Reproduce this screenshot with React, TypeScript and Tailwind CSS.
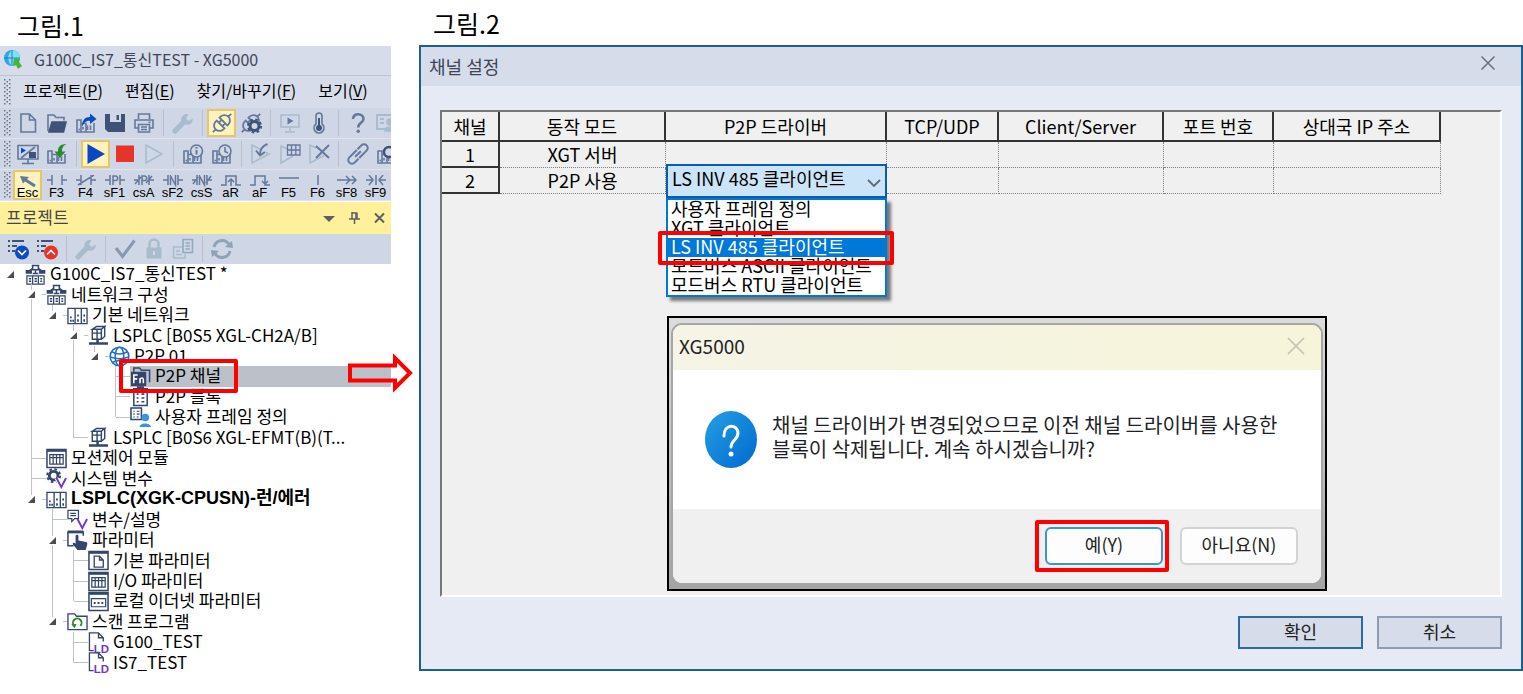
import React from "react";

type Children = { children?: React.ReactNode };

const NAVY = "#3f5378";
const STEEL = "#64789b";
const PALE = "#a9bccd";

function Svg({ children, color = STEEL, size = 22 }: Children & { color?: string; size?: number }) {
  return (
    <svg width={size} height={size} viewBox="0 0 22 22" fill="none" stroke={color} strokeWidth="1.6" aria-hidden="true" className="-my-1 shrink-0">
      {children}
    </svg>
  );
}

/* ---------- toolbar drawings ---------- */

const wrench = (
  <Svg color={PALE}>
    <path d="M14.500 12.500a5 5 0 0 0 6-6l-3 2.200-2.600-.8-.6-2.600 2.400-2.800a5.500 5.500 0 0 0-7.400 6.200L1.200 16.900a2.600 2.600 0 0 0 3.800 3.800l8-8.200z" fill={PALE} stroke="none" />
  </Svg>
);

const plugPath = (
  <>
    <g transform="rotate(-45 11 11)" strokeWidth="1.800">
      <path d="M9 5.500H7.500A5.500 5.500 0 0 0 7.500 16.500H9ZM-2 11H2M20 11H24M13 5.500H14.500A5.500 5.500 0 0 1 14.500 16.500H13ZM9 8.500H13M9 13.500H13" />
    </g>
  </>
);

const bars = (
  <>
    <path d="M2 8H6V20H2ZM6 11.500H11V20H6ZM11 20H19V11" />
    <path d="M3.500 17.500H5M8 15V17.500M12.500 13.500V18M15.500 13.500V18" />
  </>
);

const files: React.ReactNode[] = [
  <Svg><path d="M4 2H12.500L18.500 8V20H4ZM12.500 2V8H18.500" /></Svg>,
  <Svg><path d="M2 19V3H8L10 5.500H18V8.500" /><path d="M3 20L6 10H20L17.500 20Z" fill={NAVY} stroke={NAVY} /></Svg>,
  <Svg>{bars}<path d="M7 15C7 8 10 5 15 5V1.500L21.500 7L15 12V8.800C11 8.800 9 10.500 7 15Z" fill="#0b4cc4" stroke="none" /></Svg>,
  <Svg><path d="M1 2H21V20H4L1 17Z" fill={NAVY} stroke="none" /><path d="M6 2H17V10H6Z" fill="#d0d7e7" stroke="none" /><path d="M12.500 3H15V8H12.500Z" fill={NAVY} stroke="none" /></Svg>,
  <Svg><path d="M5.500 7V2H16.500V7M5.500 16H2V8H20V16H16.500M5.500 12.500H16.500V20H5.500ZM8 15H14M8 17.500H14M15.500 10.300H17.500" /></Svg>,
];

const monitorPlay = <Svg color={PALE}><path d="M2 3H20V15H2ZM11 15V19M6 20H16" /><path d="M8.500 5.500L14.500 9L8.500 12.500Z" fill={STEEL} stroke="none" /></Svg>;
const thermometer = <Svg><path d="M8 12V4A3 3 0 0 1 14 4V12A5 5 0 1 1 8 12Z" /><circle cx="11" cy="16" r="3" fill={NAVY} stroke="none" /><path d="M11 6V15" stroke={NAVY} strokeWidth="2" /></Svg>;
const question = <Svg><path d="M6 7C6 .5 16.500 .8 16.500 7C16.500 11 11.200 10.500 11.200 15.500" strokeWidth="2.600" /><circle cx="11.200" cy="19.300" r="1.700" fill={STEEL} stroke="none" /></Svg>;
const formUser = <Svg color={PALE}><path d="M1 3H21V17H1ZM4 7H8M4 11H8" strokeWidth="2" /><circle cx="14" cy="10" r="3" fill={PALE} /><path d="M9 19C9 14 19 14 19 19Z" fill={PALE} /></Svg>;
const plug = <Svg>{plugPath}</Svg>;
const plugGear = <Svg>{plugPath}<circle cx="14.500" cy="14" r="4.500" stroke={NAVY} strokeWidth="3" fill="#d0d7e7" /><circle cx="14.500" cy="14" r="6.500" stroke={NAVY} strokeWidth="2" strokeDasharray="2.600 2.500" /></Svg>;

const monitorEdit = <Svg><path d="M1 2.500H21V16H1ZM11 16V20M5 20.500H17" /><path d="M4 4.500L9 7.500L4 10.500Z" fill="#0b4cc4" stroke="none" /><path d="M4 15L18 4" /><path d="M12 9H19V15H12Z" fill={NAVY} stroke="none" /></Svg>;
const barsGreen = <Svg>{bars}<path d="M20.500 1C13 1 12 5 12 8.500H8.500L14 15L19.500 8.500H16C16 5 17 3 20.500 1Z" fill="#2c8a2c" stroke="none" /></Svg>;
const playBlue = <Svg><path d="M2.500 1L20 11L2.500 21Z" fill="#0b46c4" stroke="none" /></Svg>;
const stopRed = <Svg><path d="M2 2.500H20V19H2Z" fill="#e6342a" stroke="none" /></Svg>;
const playOutline = <Svg color={PALE}><path d="M3 2L19 11L3 20Z" /></Svg>;
const barsInfo = <Svg>{bars}<circle cx="14.500" cy="8" r="6" fill="#d0d7e7" /><path d="M14.500 7V11.500M14.500 4V5.800" strokeWidth="2" /></Svg>;
const barsClock = <Svg>{bars}<circle cx="14" cy="8" r="6" fill="#d0d7e7" /><path d="M14 4V8.500L17 10" /></Svg>;
const barsLens = <Svg>{bars}<circle cx="13" cy="9" r="5" fill="#d0d7e7" stroke={NAVY} strokeWidth="2.400" /></Svg>;
const triCheck = <Svg color={PALE}><path d="M12 7L2 2V20L19 11L16 9.500" /><path d="M17.500 1C12.500 3 10 6 10 11M6 7.500L10 12.500L15 9" stroke={STEEL} strokeWidth="2" /></Svg>;
const triGrid = <Svg color={PALE}><path d="M8 6L2 3V20L14 13" /><path d="M8.500 2H21V12H8.500ZM12.500 2V12M16.800 2V12M8.500 7H21" stroke={STEEL} strokeWidth="1.300" /></Svg>;
const triX = <Svg color={PALE}><path d="M8 5L2 2V20L16 12.500" /><path d="M8 3L21 15M21 2L8 15" stroke={STEEL} strokeWidth="2" /></Svg>;
const link = <Svg><g transform="rotate(-45 11 11)" strokeWidth="2"><path d="M13 7.300H2.500A3.700 3.700 0 0 0 2.500 14.700H8M9 14.700H19.500A3.700 3.700 0 0 0 19.500 7.300H14" /><path d="M7 11H15" /></g></Svg>;

function Ladder({ children }: Children) {
  return (
    <svg width="24" height="12" viewBox="0 0 24 12" fill="none" stroke={STEEL} strokeWidth="1.500" aria-hidden="true" className="shrink-0">
      {children}
    </svg>
  );
}

const contact = "M2 5H7M7 0V10M17 0V10M17 5H22";
const glyph = (d: string) => <Ladder><path d={d} /></Ladder>;

const ladderKeys: { label: string; art: React.ReactNode }[] = [
  { label: "Esc", art: <Ladder><path d="M19 11L8 4" strokeWidth="3" /><path d="M4 1L13 2L7 8.500Z" fill={STEEL} stroke="none" /></Ladder> },
  { label: "F3", art: glyph(contact) },
  { label: "F4", art: glyph(contact + "M4 10L20 0") },
  { label: "sF1", art: glyph(contact + "M10 10V1H12.500A2.200 2.200 0 0 1 12.500 5.500H10") },
  { label: "csA", art: glyph(contact + "M3 9L9 2M10 10V1H12.500A2.200 2.200 0 0 1 12.500 5.500H10M14 8L20 1") },
  { label: "sF2", art: glyph(contact + "M9.500 10V1L14.500 10V0") },
  { label: "csS", art: glyph(contact + "M3 9L8 2M9.500 10V1L14.500 10V0M16 8L21 1") },
  { label: "aR", art: glyph("M2 10H7V1H17V10H22M12 11V4M9 7L12 4L15 7") },
  { label: "aF", art: glyph("M2 10H7V1H17V10H22M14 6L17 9L20 6") },
  { label: "F5", art: glyph("M2 3H22") },
  { label: "F6", art: glyph("M12 0V10") },
  { label: "sF8", art: glyph("M2 5H21M11 1L15 5L11 9M17 1L21 5L17 9") },
  { label: "sF9", art: glyph("M2 5H9M15 5H22M5 0L9 5L5 10M19 0L15 5L19 10M12 0V10") },
];

function Grip() {
  return (
    <svg width="8" height="26" viewBox="0 0 8 26" fill="#6f7480" aria-hidden="true" className="shrink-0">
      {[0, 1, 2, 3, 4, 5, 6].map((n) => (
        <g key={n}>
          <rect x="0" y={n * 4} width="1.500" height="1.500" />
          <rect x="5" y={n * 4} width="1.500" height="1.500" />
          <rect x="2.500" y={n * 4 + 2} width="1.500" height="1.500" />
        </g>
      ))}
    </svg>
  );
}

function Separator() {
  return <span className="flex w-[10px] shrink-0 justify-center"><span className="h-[26px] w-px bg-[#b9bfcc]" /></span>;
}

function Tool({ label, active, children }: Children & { label: string; active?: boolean }) {
  return (
    <button
      type="button"
      aria-label={label}
      className={
        active
          ? "flex h-[28px] w-[29px] shrink-0 items-center justify-center border-2 border-[#e8c56c] bg-[#fdf3bd]"
          : "flex h-[28px] w-[29px] shrink-0 items-center justify-center"
      }
    >
      {children}
    </button>
  );
}

function Bar({ children }: Children) {
  return <div className="flex h-[31px] items-center overflow-hidden border-b border-[#dfe4ef] bg-[#cfd6e6] pl-[4px]"><Grip /><span className="w-px shrink-0" />{children}</div>;
}

/* ---------- tree drawings ---------- */

const INK = "#34466c";

const network = (
  <Svg color={INK} size={21}>
    <path d="M7 1.500H15M8 1.500V6H14V1.500M11 6V10M4 7.500L8 4.500M14 4.500L18 7.500M8 10H14" />
    <path d="M1.500 7H6.500V9.500H1.500ZM15.500 7H20.500V9.500H15.500Z" fill={INK} />
    <path d="M2 12.500H20V21H2ZM8 12.500V21M14 12.500V21" strokeWidth="1.300" />
    <path d="M4 15.500H6.500M10 15.500H12.500M16 15.500H18M4 18H6.500M10 18H12.500M16 18H18" />
  </Svg>
);
const rack = (
  <Svg color={INK} size={21}>
    <path d="M1 3.500H21V19.500H1ZM8.500 3.500V19.500M15 3.500V19.500" strokeWidth="1.400" />
    <path d="M4 12V14M4 15.500V17.500M6.500 15.500V17.500M11.500 10V12M11.500 15V17.500M18 10V12M18 15V17.500" strokeWidth="1.800" />
  </Svg>
);
const server = (
  <Svg color={INK} size={21}>
    <path d="M4.500 4.500L9 1.500H17.500L14 4.500ZM4.500 4.500H14V15H4.500ZM14 4.500L17.500 1.500V12L14 15M9.500 4.500V15M4.500 8.500H14" strokeWidth="1.500" />
    <path d="M10 15V18.500M1 19.500H21" strokeWidth="2.600" />
  </Svg>
);
const globe = (
  <Svg color="#1c70c8" size={21}>
    <circle cx="11" cy="11" r="9.800" fill="#fff" />
    <ellipse cx="11" cy="11" rx="4.500" ry="9.800" />
    <path d="M3 6C8 9 14 9 19 6M1.500 11.500C8 14 14 14 20.500 11.500M4 17C8 15 14 15 18 17" />
  </Svg>
);
const fnFolder = (
  <Svg color={INK} size={21}>
    <path d="M4 6V2H10L12 4.500H20.500V17" fill="#bfc5d1" />
    <path d="M1 6H17V21H1Z" fill={INK} stroke="none" />
    <path d="M4 18V9.500H8M4 13.500H7.500M10.500 18V12.500M10.500 14C11.500 12 14 12 14 14.500V18" stroke="#fff" strokeWidth="1.600" />
  </Svg>
);
const blockDoc = (
  <Svg color={INK} size={21}>
    <path d="M4 3H18V20.500H4Z" fill="#fff" />
    <path d="M8 1H14V4H8Z" fill={INK} />
    <path d="M7 8.500H9M12 8.500H15M7 12.500H9M12 12.500H15M7 16.500H9M12 16.500H15" />
  </Svg>
);
const userDoc = (
  <Svg color={INK} size={21}>
    <path d="M1 1H12V13H1Z" />
    <path d="M3.500 4.500H5M7 4.500H10M3.500 7.500H5M7 7.500H10M3.500 10.500H5M7 10.500H9" strokeWidth="1.200" />
    <circle cx="16" cy="11" r="4" fill="#3d94de" stroke="none" />
    <path d="M10 21C10 16 22 16 22 21Z" fill="#3d94de" stroke="none" />
  </Svg>
);
const frameIcon = (inner: React.ReactNode) => (
  <Svg color={INK} size={21}>
    <path d="M1 1.500H21V20.500H1Z" fill="#fff" />
    <path d="M1 2.500H21" strokeWidth="3" />
    {inner}
  </Svg>
);
const moduleIcon = frameIcon(<path d="M4 7H18V17H4ZM7.500 7V17M11 7V17M14.500 7V17M4 10H18" strokeWidth="1.300" />);
const fileIcon = frameIcon(<path d="M6.500 6.500H12L16 10.500V18H6.500ZM12 6.500V10.500H16" strokeWidth="1.400" />);
const etherIcon = frameIcon(<><path d="M3.500 8H18.500V16.500H3.500Z" strokeWidth="1.300" /><path d="M6 12.500H8M10 12.500H12M14 12.500H16" strokeWidth="2" /></>);
const gearV = (
  <Svg color={INK} size={21}>
    <circle cx="8" cy="8" r="4.500" strokeWidth="3" />
    <circle cx="8" cy="8" r="6.800" strokeWidth="2" strokeDasharray="2.700 2.640" />
    <path d="M11 10.500L16 20L21 10.500" stroke="#fff" strokeWidth="4" />
    <path d="M11 10.500L16 20L21 10.500" stroke="#6f38d0" strokeWidth="2" />
  </Svg>
);
const noteV = (
  <Svg color={INK} size={21}>
    <path d="M1 1.500H12V10H8L5 13V10H1ZM3.500 4.500H9.500M3.500 7H9.500" strokeWidth="1.300" />
    <path d="M11 10.500L16 20L21 10.500" stroke="#6f38d0" strokeWidth="2" />
  </Svg>
);
const handIcon = (
  <Svg color={INK} size={21}>
    <path d="M7 16.500H1V2H17V6" /><path d="M1 2H17" strokeWidth="3" />
    <path d="M9 6.500A1.500 1.500 0 0 1 12 6.500V11L20 12.500C21.500 13 21.500 14 21 16L19.500 21H11L6 15C6 13 7.500 13 9 14.500Z" fill={INK} stroke="none" />
  </Svg>
);
const scanFolder = (
  <Svg color={INK} size={21}>
    <path d="M1 19.500V3H8L10 5.500H21V19.500Z" strokeWidth="1.400" />
    <path d="M7.500 15.500A4.500 4.500 0 1 1 14 15.500" stroke="#2c8a2c" strokeWidth="2" />
    <path d="M4.500 14L10 13.500L8 18Z" fill="#2c8a2c" stroke="none" />
  </Svg>
);
const ldFile = (
  <Svg color={INK} size={21}>
    <path d="M6 19.500H1.500V1H11L16 6V10M11 1V6H16" strokeWidth="1.400" />
    <text x="6" y="22" fontSize="12" fontWeight="700" fontFamily="Liberation Sans, sans-serif" fill="#6f38d0" stroke="none">LD</text>
  </Svg>
);

/* ---------- project tree ---------- */

type Node = { level: number; text: string; icon: React.ReactNode; open?: boolean; last?: boolean; lines?: number[]; bold?: boolean; picked?: boolean };

const nodes: Node[] = [
  { level: 0, text: "G100C_IS7_통신TEST *", icon: network, open: true, last: true },
  { level: 1, text: "네트워크 구성", icon: network, open: true },
  { level: 2, text: "기본 네트워크", icon: rack, open: true, last: true, lines: [1] },
  { level: 3, text: "LSPLC [B0S5 XGL-CH2A/B]", icon: server, open: true, lines: [1] },
  { level: 4, text: "P2P 01", icon: globe, open: true, last: true, lines: [1, 3] },
  { level: 5, text: "P2P 채널", icon: fnFolder, lines: [1, 3], picked: true },
  { level: 5, text: "P2P 블록", icon: blockDoc, lines: [1, 3] },
  { level: 5, text: "사용자 프레임 정의", icon: userDoc, last: true, lines: [1, 3] },
  { level: 3, text: "LSPLC [B0S6 XGL-EFMT(B)(T...", icon: server, last: true, lines: [1] },
  { level: 1, text: "모션제어 모듈", icon: moduleIcon },
  { level: 1, text: "시스템 변수", icon: gearV },
  { level: 1, text: "LSPLC(XGK-CPUSN)-런/에러", icon: rack, open: true, last: true, bold: true },
  { level: 2, text: "변수/설명", icon: noteV },
  { level: 2, text: "파라미터", icon: handIcon, open: true },
  { level: 3, text: "기본 파라미터", icon: fileIcon, lines: [2] },
  { level: 3, text: "I/O 파라미터", icon: moduleIcon, lines: [2] },
  { level: 3, text: "로컬 이더넷 파라미터", icon: etherIcon, last: true, lines: [2] },
  { level: 2, text: "스캔 프로그램", icon: scanFolder, open: true, last: true },
  { level: 3, text: "G100_TEST", icon: ldFile },
  { level: 3, text: "IS7_TEST", icon: ldFile, last: true },
];

function Cell({ children }: Children) {
  return <span className="flex w-[21px] shrink-0 flex-col items-center self-stretch">{children}</span>;
}

function Branch({ node }: { node: Node }) {
  const line = "w-px flex-1 bg-[#bcc2cf]";
  const blank = "w-px flex-1";
  return (
    <>
      <Cell>
        <span className={node.level > 0 ? line : blank} />
        {node.open && (
          <svg width="9" height="9" viewBox="0 0 9 9" aria-hidden="true" className="shrink-0"><path d="M8 1V8H1Z" fill="#4d4d4d" /></svg>
        )}
        <span className={node.last ? blank : line} />
      </Cell>
      <span className="flex w-[4px] shrink-0 justify-end">{node.level > 0 && <span className={node.open ? "h-px w-[4px] bg-[#bcc2cf]" : "-ml-[10px] h-px w-[14px] shrink-0 bg-[#bcc2cf]"} />}</span>
    </>
  );
}

function TreeRow({ node }: { node: Node }) {
  const indents = Array.from({ length: node.level }, (_, n) => n);
  return (
    <li role="treeitem" aria-level={node.level + 1} aria-selected={!!node.picked} className="relative flex min-h-[20px] flex-1 items-center">
      {indents.map((n) => (
        <Cell key={n}>{node.lines?.includes(n) && <span className="w-px flex-1 bg-[#bcc2cf]" />}</Cell>
      ))}
      <Branch node={node} />
      <span className={node.picked ? "flex flex-1 items-center gap-[4px] self-stretch bg-[#bbc0c9]" : "flex flex-1 items-center gap-[4px]"}>
        {node.icon}
        <span
          className={
            node.bold
              ? "pb-[2px] font-['Liberation_Sans','Noto_Sans_CJK_KR',sans-serif] text-[18px] leading-[18px] font-bold whitespace-nowrap"
              : "pb-[2px] text-[17px] leading-[18px] whitespace-nowrap"
          }
        >
          {node.text}
        </span>
      </span>
      {node.picked && (
        <>
          <span className="absolute -top-[7px] left-[119px] z-10 h-[34px] w-[119px] rounded-[2px] border-4 border-[#ff0000]" />
          <svg width="66" height="40" viewBox="0 0 66 40" aria-hidden="true" className="absolute -top-[13px] left-[348px] z-10">
            <path d="M2 12.500H47V5L62 20L47 35V27.500H2Z" fill="none" stroke="#ff0000" strokeWidth="4" />
          </svg>
        </>
      )}
    </li>
  );
}

function MenuItem({ text, hotkey }: { text: string; hotkey: string }) {
  return <button type="button" className="shrink-0 whitespace-nowrap">{text}({<u className="underline-offset-2">{hotkey}</u>})</button>;
}

function ProjectWindow() {
  return (
    <section className="flex w-[391px] shrink-0 flex-col pb-[21px]">
      <h2 className="h-[46px] pt-[9px] pl-[17px] text-[25px] leading-[32px]">그림.1</h2>
      <div className="flex h-[30px] items-center gap-[12px] border-b border-[#bfc4cf] bg-[#d6dcea] pb-[4px] pl-[3px] text-[16px] leading-[24px] whitespace-nowrap text-[#3f4558]">
        <svg width="19" height="20" viewBox="0 0 19 20" aria-hidden="true" className="shrink-0">
          <circle cx="9" cy="9" r="8" fill="#2fa6ea" />
          <path d="M9 1A8 8 0 0 1 9 17C4 13 4 5 9 1Z" fill="#7fe0f6" />
          <path d="M1 9H17M9 1V17" stroke="#1c7fd0" strokeWidth="1" />
          <path d="M11 9L17 10L16 13L19 17L15 20L13 16L10 17Z" fill="#43b53a" />
        </svg>
        G100C_IS7_통신TEST - XG5000
      </div>
      <div className="flex h-[32px] items-center overflow-hidden bg-[#d6dcea] pl-[4px] text-[16px] leading-[24px] text-black">
        <Grip />
        <nav className="flex gap-[22px] pb-[4px] pl-[11px]">
          <MenuItem text="프로젝트" hotkey="P" />
          <MenuItem text="편집" hotkey="E" />
          <MenuItem text="찾기/바꾸기" hotkey="F" />
          <MenuItem text="보기" hotkey="V" />
        </nav>
      </div>
      <Bar>
        {["새 파일", "열기", "가져오기", "저장", "인쇄"].map((n, i) => <Tool key={n} label={n}>{files[i]}</Tool>)}
        <Separator />
        <Tool label="설정">{wrench}</Tool>
        <Separator />
        <Tool label="접속" active>{plug}</Tool>
        <Tool label="접속 설정">{plugGear}</Tool>
        <Separator />
        <Tool label="모니터">{monitorPlay}</Tool>
        <Tool label="온도">{thermometer}</Tool>
        <Separator />
        <Tool label="도움말">{question}</Tool>
        <Tool label="사용자">{formUser}</Tool>
      </Bar>
      <Bar>
        <Tool label="모니터 편집">{monitorEdit}</Tool>
        <Tool label="쓰기">{barsGreen}</Tool>
        <Separator />
        <Tool label="런" active>{playBlue}</Tool>
        <Tool label="스톱">{stopRed}</Tool>
        <Tool label="디버그">{playOutline}</Tool>
        <Separator />
        <Tool label="정보">{barsInfo}</Tool>
        <Tool label="시간">{barsClock}</Tool>
        <Separator />
        <Tool label="확인">{triCheck}</Tool>
        <Tool label="표">{triGrid}</Tool>
        <Tool label="해제">{triX}</Tool>
        <Separator />
        <Tool label="링크">{link}</Tool>
        <Tool label="검색">{barsLens}</Tool>
      </Bar>
      <Bar>
        {ladderKeys.map(({ label, art }) => (
          <button
            key={label}
            type="button"
            className={
              label === "Esc"
                ? "flex h-[30px] w-[29px] shrink-0 flex-col items-center justify-center bg-[#fdf3bd] pt-[4px] font-['Liberation_Sans',sans-serif] text-[13px] leading-[12px] ring-2 ring-[#e8c56c] ring-inset"
                : "flex h-[30px] w-[29px] shrink-0 flex-col items-center justify-center pt-[4px] font-['Liberation_Sans',sans-serif] text-[13px] leading-[12px]"
            }
          >
            {art}
            {label}
          </button>
        ))}
      </Bar>
      <div className="mt-px flex h-[32px] items-center justify-between bg-[#fff09c] pr-[6px] pb-[2px] pl-[6px] text-[17px] leading-[24px] text-[#45464c]">
        프로젝트
        <span className="flex items-center gap-[14px] pt-[2px]">
          <button type="button" aria-label="메뉴"><svg width="12" height="12" viewBox="0 0 12 12"><path d="M0 4H12L6 10Z" fill="#5e5f63" /></svg></button>
          <button type="button" aria-label="고정"><svg width="11" height="12" viewBox="0 0 11 12" fill="none" stroke="#5e5f63" strokeWidth="1.500"><path d="M3 0V6.500M8 .500V6.500M3 1H8M0 7H11M5.500 7V12M7 1V7" /></svg></button>
          <button type="button" aria-label="닫기"><svg width="11" height="12" viewBox="0 0 11 12" fill="none" stroke="#5e5f63" strokeWidth="2"><path d="M1 1.500L10 10.500M10 1.500L1 10.500" /></svg></button>
        </span>
      </div>
      <div className="flex h-[30px] items-center bg-[#cfd6e6] pl-[3px]">
        <Tool label="모두 펼치기"><Svg><path d="M1 3H3M5 3H17M1 8H3M5 8H10M1 13H3M5 13H8" strokeWidth="2" stroke={NAVY} /><circle cx="15" cy="14.500" r="7" fill="#0b4cc4" stroke="none" /><path d="M11 12.500L15 16.500L19 12.500" stroke="#fff" /></Svg></Tool>
        <Tool label="모두 접기"><Svg><path d="M1 3H3M5 3H17M1 8H3M5 8H10M1 13H3M5 13H8" strokeWidth="2" stroke={NAVY} /><circle cx="15" cy="14.500" r="7" fill="#e6342a" stroke="none" /><path d="M11 16.500L15 12.500L19 16.500" stroke="#fff" /></Svg></Tool>
        <Separator />
        <Tool label="설정">{wrench}</Tool>
        <Separator />
        <Tool label="적용"><Svg color="#8798b0"><path d="M2 10L8.500 18.500L20.500 2.500" strokeWidth="3" /></Svg></Tool>
        <Tool label="잠금"><Svg color={PALE}><path d="M6.500 10V6A4.500 4.500 0 0 1 15.500 6V10" strokeWidth="2.500" /><path d="M3.500 9.500H18.500V20.500H3.500Z" fill={PALE} stroke="none" /><path d="M11 13V17" stroke="#d0d7e7" strokeWidth="2" /></Svg></Tool>
        <Tool label="복사"><Svg color={PALE}><path d="M10 9H1.500V20H13V16M4 13H8M4 16.500H10" /><path d="M11 1.500H20.500V14.500H11ZM13.500 5H18M13.500 8H18M13.500 11H18" stroke="#94a9bd" /></Svg></Tool>
        <Separator />
        <Tool label="새로 고침"><Svg color="#8fa3b7"><path d="M3 9A8.200 8.200 0 0 1 18 6.500M19 13A8.200 8.200 0 0 1 4 15.500" strokeWidth="3" /><path d="M0 12L1 19L8 13ZM22 10L21 3L14 9Z" fill="#8fa3b7" stroke="none" /></Svg></Tool>
      </div>
      <ul role="tree" className="flex flex-1 flex-col text-black">
        {nodes.map((node, i) => <TreeRow key={i} node={node} />)}
      </ul>
    </section>
  );
}

/* ---------- channel settings ---------- */

const columns = ["채널", "동작 모드", "P2P 드라이버", "TCP/UDP", "Client/Server", "포트 번호", "상대국 IP 주소"];
const drivers = ["사용자 프레임 정의", "XGT 클라이언트", "LS INV 485 클라이언트", "모드버스 ASCII 클라이언트", "모드버스 RTU 클라이언트"];
const picked = "LS INV 485 클라이언트";

function DriverSelect() {
  return (
    <div className="absolute -top-[4px] left-0 z-10 w-[221px] text-left">
      <div className="relative">
        <select aria-labelledby="col-2" defaultValue={picked} className="block h-[34px] w-full appearance-none border-2 border-[#0b5cab] bg-[#cce4f7] pb-[6px] pl-[4px] text-[18px] leading-[24px] text-black">
          {drivers.map((d) => <option key={d}>{d}</option>)}
        </select>
        <svg width="14" height="8" viewBox="0 0 14 8" fill="none" stroke="#5c6a78" strokeWidth="1.800" aria-hidden="true" className="pointer-events-none absolute top-[15px] right-[6px]"><path d="M1 1L7 7L13 1" /></svg>
      </div>
      <ul role="listbox" aria-labelledby="col-2" className="border-2 border-[#0078d7] bg-white shadow-[4px_4px_3px_rgba(0,0,0,0.5)]">
        {drivers.map((d) => (
          <li
            key={d}
            role="option"
            aria-selected={d === picked}
            className={d === picked ? "relative h-[19px] bg-[#0078d7] pl-[3px] leading-[16px] whitespace-nowrap text-white" : "relative h-[19px] pl-[3px] leading-[16px] whitespace-nowrap"}
          >
            {d}
            {d === picked && <span className="absolute -top-[7px] -left-[10px] z-10 h-[34px] w-[236px] rounded-[2px] border-4 border-[#ff0000]" />}
          </li>
        ))}
      </ul>
    </div>
  );
}

function ChannelTable() {
  const dotted = "relative h-[26px] border-r border-b border-dotted border-[#808080] p-0";
  const solid = "h-[26px] border-r-2 border-b-2 border-[#333] p-0";
  return (
    <table className="w-[999px] table-fixed border-separate border-spacing-0 text-center text-[18px] leading-[22px] text-black">
      <colgroup>
        <col className="w-[58px]" /><col className="w-[166px]" /><col className="w-[221px]" /><col className="w-[112px]" /><col className="w-[165px]" /><col className="w-[110px]" /><col className="w-[167px]" />
      </colgroup>
      <thead>
        <tr>
          {columns.map((c, i) => <th key={c} id={"col-" + i} scope="col" className="h-[30px] border-r-2 border-b-2 border-[#333] p-0 font-normal">{c}</th>)}
        </tr>
      </thead>
      <tbody>
        <tr>
          <td className={solid}>1</td>
          <td className={dotted}><div className="pb-[2px]">XGT 서버</div></td>
          <td className={dotted} /><td className={dotted} /><td className={dotted} /><td className={dotted} /><td className={dotted} />
        </tr>
        <tr>
          <td className={solid}>2</td>
          <td className={dotted}><div className="pb-[2px]">P2P 사용</div></td>
          <td className={dotted}><DriverSelect /></td>
          <td className={dotted} /><td className={dotted} /><td className={dotted} /><td className={dotted} />
        </tr>
      </tbody>
    </table>
  );
}

function ConfirmDialog() {
  return (
    <div className="mt-[122px] ml-[225px] w-[660px] border-2 border-black bg-linear-to-b from-[#dcdcdc] to-[#a4a4a4] px-[2px] pt-[5px] pb-[4px]">
      <div role="dialog" aria-label="XG5000" className="overflow-hidden rounded-[11px] border-2 border-[#a6a6a6] bg-white">
        <div className="flex h-[45px] items-center justify-between bg-linear-to-r from-[#f5f4e6] to-[#f6f4d9] pr-[16px] pb-[3px] pl-[6px] text-[19px] text-[#222]">
          XG5000
          <button type="button" aria-label="닫기"><svg width="18" height="18" viewBox="0 0 18 18" fill="none" stroke="#c2c1b2" strokeWidth="1.600"><path d="M1 1L17 17M17 1L1 17" /></svg></button>
        </div>
        <div className="flex h-[139px] items-center gap-[15px] pl-[32px]">
          <svg width="52" height="58" viewBox="0 0 52 58" aria-hidden="true" className="shrink-0">
            <defs><linearGradient id="q" x1="0" y1="0" x2="1" y2="1"><stop offset="0" stopColor="#23a0e4" /><stop offset="1" stopColor="#0069cf" /></linearGradient></defs>
            <ellipse cx="26" cy="28.500" rx="26" ry="28.500" fill="url(#q)" />
            <path d="M19 25C19 12 33 13 33 22C33 29 26 29 26 36" fill="none" stroke="#fff" strokeWidth="3" strokeLinecap="round" />
            <circle cx="26" cy="43" r="2.500" fill="#fff" />
          </svg>
          <p className="pb-[5px] text-[20px] leading-[24px] whitespace-nowrap text-[#1f1f28]">
            채널 드라이버가 변경되었으므로 이전 채널 드라이버를 사용한<br />블록이 삭제됩니다. 계속 하시겠습니까?
          </p>
        </div>
        <div className="flex h-[74px] items-center justify-end gap-[17px] bg-[#f0f0f0] pr-[23px] text-[18px] leading-[24px] text-[#222]">
          <span className="relative">
            <button type="button" className="block h-[38px] w-[118px] rounded-[6px] border-2 border-[#3c93da] bg-[#fdfdfd] pb-[4px]">예(Y)</button>
            <span className="absolute -top-[7px] -left-[10px] h-[52px] w-[134px] rounded-[2px] border-4 border-[#ff0000]" />
          </span>
          <button type="button" className="h-[38px] w-[118px] rounded-[6px] border-2 border-[#d3d3d3] bg-[#fdfdfd] pb-[4px]">아니요(N)</button>
        </div>
      </div>
    </div>
  );
}

function ChannelWindow() {
  return (
    <section className="flex min-w-0 flex-1 flex-col pb-[23px]">
      <h2 className="h-[45px] pt-[7px] pl-[14px] text-[25px] leading-[32px]">그림.2</h2>
      <div className="flex flex-1 flex-col border-2 border-[#1b5f93] bg-[#e6eaf4]">
        <div className="flex h-[39px] items-center justify-between bg-[#d6dcea] pr-[26px] pb-[2px] pl-[8px] text-[18px] leading-[24px] text-[#3f4558]">
          채널 설정
          <button type="button" aria-label="닫기" className="pb-[5px]"><svg width="14" height="14" viewBox="0 0 14 14" fill="none" stroke="#6b7078" strokeWidth="1.500"><path d="M.500 .500L13.500 13.500M13.500 .500L.500 13.500" /></svg></button>
        </div>
        <div className="mx-[19px] mt-[24px] flex-1 border-2 border-t-[#777] border-r-white border-b-white border-l-[#777] bg-[#f0f0f0]">
          <ChannelTable />
          <ConfirmDialog />
        </div>
        <div className="flex justify-end gap-[14px] px-[19px] pt-[19px] pb-[20px] text-[18px] leading-[24px] text-[#222]">
          <button type="button" className="h-[33px] w-[125px] border-2 border-[#2b6b9f] bg-[#d6dcea] pb-[4px]">확인</button>
          <button type="button" className="h-[33px] w-[125px] border-2 border-[#8e9bb5] bg-[#d6dcea] pb-[4px]">취소</button>
        </div>
      </div>
    </section>
  );
}

export default function App() {
  return (
    <main className="flex min-h-screen gap-[28px] bg-white font-['Noto_Sans_CJK_KR','Liberation_Sans',sans-serif] text-black">
      <ProjectWindow />
      <ChannelWindow />
    </main>
  );
}
